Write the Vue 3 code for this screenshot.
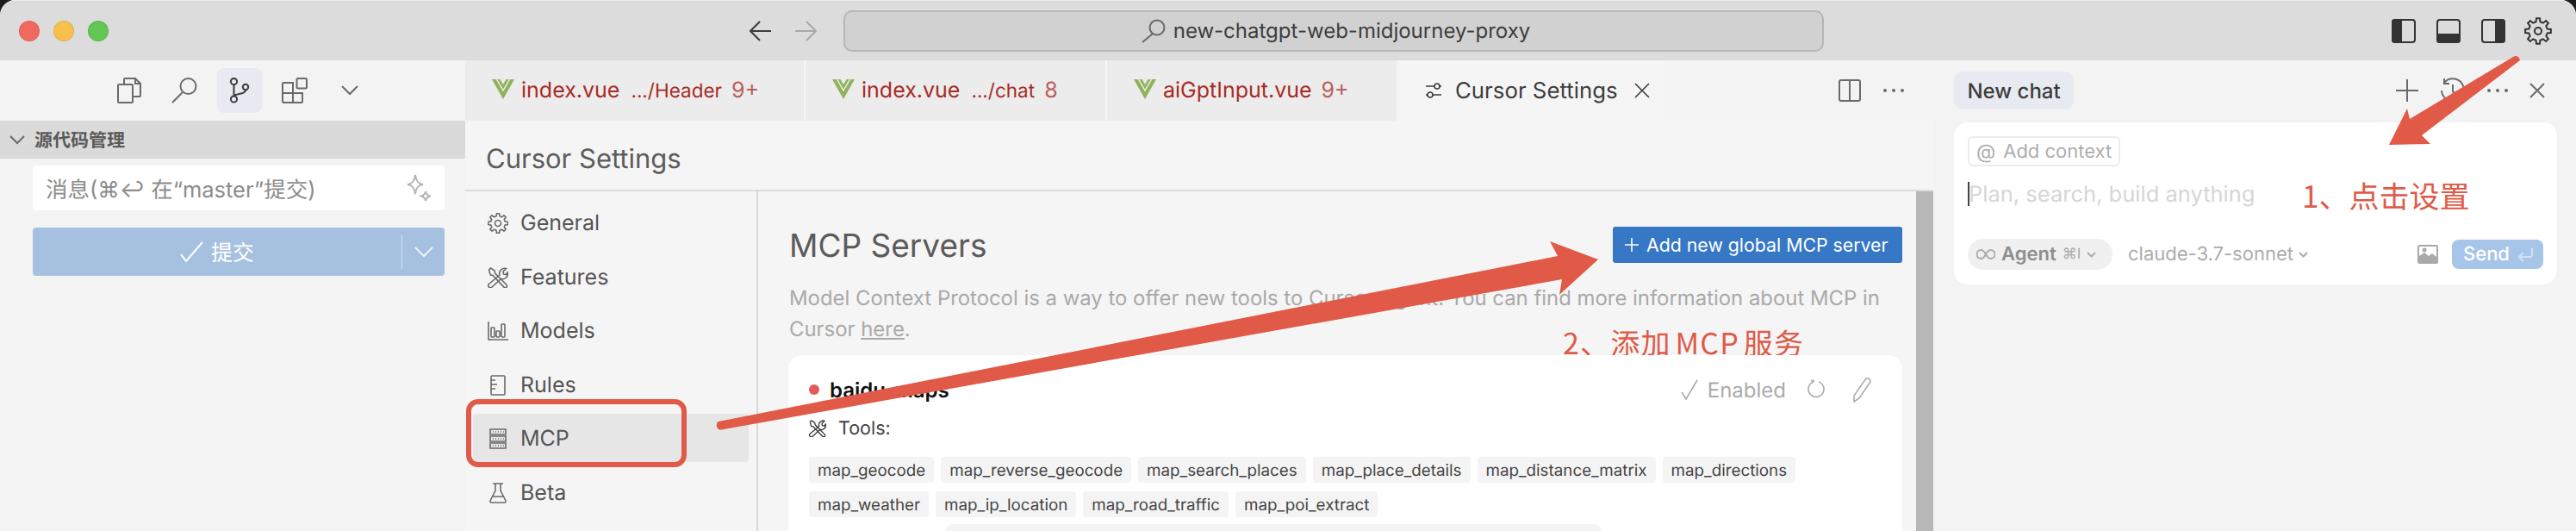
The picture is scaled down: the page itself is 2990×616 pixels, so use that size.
<script setup>
function gear(cx, cy, ro, ri, teeth) {
  const pts = []
  const step = (Math.PI * 2) / teeth
  for (let i = 0; i < teeth; i++) {
    const a = i * step - Math.PI / 2
    const w = step * 0.17
    const p = (r, t) => `${(cx + r * Math.cos(t)).toFixed(2)} ${(cy + r * Math.sin(t)).toFixed(2)}`
    pts.push(`${i ? 'L' : 'M'}${p(ro, a - w)}`, `L${p(ro, a + w)}`, `L${p(ri, a + w * 1.7)}`, `L${p(ri, a + step - w * 1.7)}`)
  }
  return pts.join(' ') + ' Z'
}
const bigGear = gear(16, 16, 15, 11, 8)
const navItems = [
  { label: 'General', paths: [gear(12, 12, 11.5, 8.5, 8), 'M12 8.5a3.5 3.5 0 1 0 0 7 3.5 3.5 0 0 0 0-7z'] },
  { label: 'Features', paths: ['M1.5 3 3.5 1 8 4l.6 3L22 20.5a2 2 0 0 1-2.8 2.8L6 9.5l-2.8-.7z', 'M14 9a6 6 0 0 1 7.5-7.5L18 5l.5 3 3 .5L23 6a6 6 0 0 1-7.5 7.5L5 23a2 2 0 0 1-3.5-3.5z'] },
  { label: 'Models', paths: ['M1 1v21h23', 'M5 8h2a1 1 0 0 1 1 1v9a1 1 0 0 1-1 1H5a1 1 0 0 1-1-1V9a1 1 0 0 1 1-1z', 'M11 12h2a1 1 0 0 1 1 1v5a1 1 0 0 1-1 1h-2a1 1 0 0 1-1-1v-5a1 1 0 0 1 1-1z', 'M17 4h2a1 1 0 0 1 1 1v13a1 1 0 0 1-1 1h-2a1 1 0 0 1-1-1V5a1 1 0 0 1 1-1z'] },
  { label: 'Rules', paths: ['M5 1h14a1 1 0 0 1 1 1v20a1 1 0 0 1-1 1H5a1 1 0 0 1-1-1V2a1 1 0 0 1 1-1z', 'M4 6h5M4 11h7M4 16h5'] },
  { label: 'MCP', paths: ['M3 1h18v6H3zM3 9h18v6H3zM3 17h18v6H3z', 'M6 4h1M9 4h1M12 4h1M15 4h1M18 4h1M6 12h1M9 12h1M12 12h1M15 12h1M18 12h1M6 20h1M9 20h1M12 20h1M15 20h1M18 20h1'] },
  { label: 'Beta', paths: ['M6 1h12M9 1v8L3 21a1.4 1.4 0 0 0 1.4 2h15.2a1.4 1.4 0 0 0 1.4-2L15 9V1M5.5 16h13'] },
]
const rows = [
  ['map_geocode', 'map_reverse_geocode', 'map_search_places', 'map_place_details', 'map_distance_matrix', 'map_directions'],
  ['map_weather', 'map_ip_location', 'map_road_traffic', 'map_poi_extract'],
]
const tabs = [
  { name: 'index.vue', path: '.../Header', n: '9+', w: 395 },
  { name: 'index.vue', path: '.../chat', n: '8', w: 350 },
  { name: 'aiGptInput.vue', path: '', n: '9+', w: 338 },
]
</script>

<template>
  <div class="window">
    <header class="titlebar">
      <div class="lights">
        <i class="light red"></i><i class="light yellow"></i><i class="light green"></i>
      </div>
      <div class="arrows">
        <svg width="26" height="26" viewBox="0 0 26 26" class="ico-dark"><path d="M25 13H1M12 2 1 13l11 11" /></svg>
        <svg width="26" height="26" viewBox="0 0 26 26" class="ico-faint"><path d="M1 13h24M14 2l11 11-11 11" /></svg>
      </div>
      <div class="searchbox">
        <svg width="28" height="28" viewBox="0 0 28 28" class="ico-mid"><circle cx="18" cy="10" r="8.500" /><path d="M13 17 1 27" /></svg>
        <span>new-chatgpt-web-midjourney-proxy</span>
      </div>
      <div class="panels">
        <svg width="28" height="28" viewBox="0 0 28 28"><rect x="1" y="1" width="26" height="26" rx="3" class="pf" /><path d="M4 0h8v28H4a4 4 0 0 1-4-4V4a4 4 0 0 1 4-4z" /></svg>
        <svg width="28" height="28" viewBox="0 0 28 28"><rect x="1" y="1" width="26" height="26" rx="3" class="pf" /><path d="M0 17h28v7a4 4 0 0 1-4 4H4a4 4 0 0 1-4-4z" /></svg>
        <svg width="28" height="28" viewBox="0 0 28 28"><rect x="1" y="1" width="26" height="26" rx="3" class="pf" /><path d="M16 0h8a4 4 0 0 1 4 4v20a4 4 0 0 1-4 4h-8z" /></svg>
        <svg class="gear" width="32" height="32" viewBox="0 0 32 32"><path :d="bigGear" class="pf" /><circle cx="16" cy="16" r="4" class="pf" /></svg>
      </div>
    </header>

    <div class="workspace">
      <aside class="side">
        <div class="activity">
          <span class="slot">
            <svg width="28" height="30" viewBox="0 0 28 30" class="ico-mid"><path d="M8 8V2a1 1 0 0 1 1-1h12l6 6v14a1 1 0 0 1-1 1H18M21 1v6h6" /><path d="M2 8h15a1 1 0 0 1 1 1v19a1 1 0 0 1-1 1H2a1 1 0 0 1-1-1V9a1 1 0 0 1 1-1z" /></svg>
          </span>
          <span class="slot">
            <svg width="30" height="30" viewBox="0 0 30 30" class="ico-mid"><circle cx="19.500" cy="10" r="9" /><path d="M13 17 1 29" /></svg>
          </span>
          <span class="slot on">
            <svg width="24" height="30" viewBox="0 0 24 30" class="ico-dark"><circle cx="5.500" cy="4.500" r="3.600" /><circle cx="5.500" cy="25" r="3.600" /><circle cx="19" cy="11" r="3.200" /><path d="M5.500 8v13.500M19 14.200c0 3-3 4-6.500 4.600-3.500.6-7 1-7 3" /></svg>
          </span>
          <span class="slot">
            <svg width="30" height="30" viewBox="0 0 30 30" class="ico-mid"><path d="M13 6H2a1 1 0 0 0-1 1v21a1 1 0 0 0 1 1h21a1 1 0 0 0 1-1V18H13zM1 18h12v11" /><rect x="17.500" y="1" width="11.500" height="11.500" rx="1.500" /></svg>
          </span>
          <span class="slot">
            <svg width="20" height="12" viewBox="0 0 20 12" class="ico-mid"><path d="m1 1 9 9 9-9" /></svg>
          </span>
        </div>
        <div class="section">
          <svg width="18" height="11" viewBox="0 0 18 11" class="ico-mid"><path d="m1 1 8 8 8-8" /></svg>
          <span>源代码管理</span>
        </div>
        <div class="msg">
          <span>消息(⌘↩ 在“master”提交)</span>
          <svg width="28" height="32" viewBox="0 0 28 32" class="ico-faint2"><path d="M10 1c1 7 3 10 9 11-6 1-8 4-9 11-1-7-3-10-9-11 6-1 8-4 9-11zM22 20c.5 3 1.500 4.500 5 5.500-3.500 1-4.500 2.500-5 5.500-.5-3-1.500-4.500-5-5.500 3.500-1 4.500-2.500 5-5.500z" /></svg>
        </div>
        <div class="commit">
          <span class="commit-main">
            <svg width="28" height="24" viewBox="0 0 28 24" class="ico-white"><path d="m1 15 6 8L26 1" /></svg>
            提交
          </span>
          <span class="commit-more">
            <svg width="22" height="13" viewBox="0 0 22 13" class="ico-white thin"><path d="m1 1 10 10L21 1" /></svg>
          </span>
        </div>
      </aside>

      <main class="main">
        <div class="tabs">
          <div v-for="t in tabs" :key="t.name + t.path" class="tab" :style="{ width: t.w + 'px' }">
            <svg class="vue" width="26" height="23" viewBox="0 0 26 23"><path d="M0 0h26L13 23z" fill="#8fb35b" /><path d="M9.500 0 13 6l3.500-6z" fill="#ececec" /><path d="m5.500 0 7.500 13L20.500 0" stroke="#ececec" stroke-width="1.500" /></svg>
            <span class="tab-name">{{ t.name }}</span>
            <span v-if="t.path" class="tab-path">{{ t.path }}</span>
            <span class="tab-n">{{ t.n }}</span>
          </div>
          <div class="tab active">
            <svg width="20" height="18" viewBox="0 0 20 18" class="ico-dark thin"><path d="M1 4h10M17 4h2M1 14h2M9 14h10" /><circle cx="14" cy="4" r="3" /><circle cx="6" cy="14" r="3" /></svg>
            <span class="tab-title">Cursor Settings</span>
            <svg width="18" height="18" viewBox="0 0 18 18" class="ico-dark thin"><path d="m1 1 16 16M17 1 1 17" /></svg>
          </div>
          <div class="tab-tools">
            <svg width="26" height="26" viewBox="0 0 26 26" class="ico-mid"><rect x="1" y="1" width="24" height="24" rx="2" /><path d="M13 1v24" /></svg>
            <span class="dots"><i></i><i></i><i></i></span>
          </div>
        </div>

        <div class="settings-head">Cursor Settings</div>

        <div class="settings">
          <nav class="nav">
            <div v-for="n in navItems" :key="n.label" class="nav-item" :class="{ sel: n.label === 'MCP' }">
              <svg width="24" height="24" viewBox="0 0 24 24" class="ico-mid thin">
                <path v-for="d in n.paths" :key="d" :d="d" />
              </svg>
              <span>{{ n.label }}</span>
            </div>
          </nav>
          <section class="content">
            <div class="content-head">
              <h1>MCP Servers</h1>
              <button class="add">
                <svg width="16" height="16" viewBox="0 0 16 16" class="ico-white thin"><path d="M8 0v16M0 8h16" /></svg>
                Add new global MCP server
              </button>
            </div>
            <p class="desc">Model Context Protocol is a way to offer new tools to Cursor Agent. You can find more information about MCP in Cursor <u>here</u>.</p>
            <div class="note2">2、添加 MCP 服务</div>
            <div class="card">
              <div class="card-top">
                <i class="dot"></i>
                <strong>baidu-maps</strong>
                <span class="card-actions">
                  <svg width="20" height="24" viewBox="0 0 20 24" class="ico-grey thin"><path d="m1 15 5 8L19 1" /></svg>
                  <span class="enabled">Enabled</span>
                  <svg width="20" height="24" viewBox="0 0 20 24" class="ico-grey thin"><path d="M7 3a9 9 0 1 0 6 0M7 3V.5M7 3 4 1" /></svg>
                  <svg width="22" height="30" viewBox="0 0 22 30" class="ico-grey thin"><path d="M16 2c2-1 5 1 5 4L8 25l-6 4v-7z" /></svg>
                </span>
              </div>
              <div class="tools">
                <svg width="20" height="20" viewBox="0 0 24 24" class="ico-dark thin">
                  <path v-for="d in navItems[1].paths" :key="d" :d="d" />
                </svg>
                Tools:
              </div>
              <div class="chips">
                <div v-for="(r, i) in rows" :key="i" class="chip-row">
                  <span v-for="c in r" :key="c" class="chip">{{ c }}</span>
                </div>
                <div class="chip-wide"></div>
              </div>
            </div>
          </section>
          <div class="scrollbar"></div>
        </div>
      </main>

      <aside class="chat">
        <div class="chat-head">
          <span class="newchat">New chat</span>
          <div class="chat-tools">
            <svg width="26" height="26" viewBox="0 0 26 26" class="ico-mid"><path d="M13 0v26M0 13h26" /></svg>
            <svg width="30" height="30" viewBox="0 0 30 30" class="ico-mid"><path d="M5 6a13 13 0 1 1-3 9M5 1v6h6M15 8v8l5 5" /></svg>
            <span class="dots"><i></i><i></i><i></i></span>
            <svg width="18" height="18" viewBox="0 0 18 18" class="ico-mid"><path d="m1 1 16 16M17 1 1 17" /></svg>
          </div>
        </div>
        <div class="composer">
          <div class="ctx"><span class="at">@</span>Add context</div>
          <div class="prompt"><i class="caret"></i>Plan, search, build anything</div>
          <div class="note1">1、点击设置</div>
          <div class="composer-foot">
            <span class="agent">
              <svg width="22" height="12" viewBox="0 0 22 12" class="ico-grey"><path d="M11 6C9 2.500 7.500 1 5.500 1a5 5 0 0 0 0 10c2 0 3.500-1.500 5.500-5s3.500-5 5.500-5a5 5 0 0 1 0 10c-2 0-3.500-1.500-5.500-5z" /></svg>
              <b>Agent</b>
              <em>⌘I</em>
              <svg width="11" height="7" viewBox="0 0 11 7" class="ico-grey"><path d="m1 1 4.500 4.500L10 1" /></svg>
            </span>
            <span class="model">claude-3.7-sonnet
              <svg width="11" height="7" viewBox="0 0 11 7" class="ico-grey"><path d="m1 1 4.500 4.500L10 1" /></svg>
            </span>
            <svg class="img" width="24" height="24" viewBox="0 0 24 24"><path fill-rule="evenodd" d="M2 1h20a2 2 0 0 1 2 2v18a2 2 0 0 1-2 2H2a2 2 0 0 1-2-2V3a2 2 0 0 1 2-2zm0 2v11l6-4 5 4 4-3 5 4V3z" fill="#a9a9a9" /><circle cx="8" cy="7" r="2.500" fill="#a9a9a9" /></svg>
            <span class="send">Send
              <svg width="17" height="17" viewBox="0 0 17 17" class="ico-pale"><path d="M16 1v8a2 2 0 0 1-2 2H2M6 6l-5 5 5 5" /></svg>
            </span>
          </div>
        </div>
      </aside>
    </div>

    <svg class="overlay" width="2990" height="616" viewBox="0 0 2990 616">
      <path class="mark" d="M2917 66q6-3 8 4L2811 157l10 10-48 1 21-42 3 12z" />
      <rect x="544" y="466" width="250" height="73" rx="11" fill="none" stroke="#e05a47" stroke-width="6" />
      <path class="mark" d="M834 489 1808 297l-9-17 56 21-45 41 3-18L840 498q-7 2-8-3t2-6z" />
    </svg>
  </div>
</template>

<style scoped>
.window {
  position: relative;
  width: 2990px;
  height: 616px;
  overflow: hidden;
  display: flex;
  flex-direction: column;
  border-radius: 18px 18px 0 0;
  background: #f3f3f3;
  font-family: Inter, "Noto Sans CJK SC", "DejaVu Sans", sans-serif;
  color: #444;
  white-space: nowrap;
  text-rendering: geometricPrecision;
}
svg { flex: none; display: block; fill: none; stroke-width: 2; }
i, em { font-style: normal; }
.ico-dark { stroke: #3c3c3c; }
.ico-mid { stroke: #6a6a6a; }
.ico-faint { stroke: #a9a9a9; }
.ico-faint2 { stroke: #b5b5b5; }
.ico-white { stroke: #fff; }
.ico-grey { stroke: #ababab; }
.ico-pale { stroke: #d2e0f2; }
.thin { stroke-width: 1.6; }

.titlebar {
  height: 70px;
  flex: none;
  display: flex;
  align-items: center;
  background: #dcdcdc;
  border-top: 1px solid #ececec;
  box-sizing: border-box;
}
.lights { display: flex; gap: 16px; margin-left: 22px; width: 848px; flex: none; }
.light { width: 24px; height: 24px; border-radius: 50%; box-sizing: border-box; border: 1px solid rgba(0, 0, 0, .08); }
.red { background: #f0695f; }
.yellow { background: #f7c04d; }
.green { background: #62c554; }
.arrows { display: flex; gap: 26px; width: 109px; flex: none; }
.searchbox {
  width: 1138px;
  height: 48px;
  flex: none;
  box-sizing: border-box;
  display: flex;
  align-items: center;
  justify-content: center;
  gap: 9px;
  padding-left: 5px;
  background: #d1d1d1;
  border: 2px solid #b6b6b6;
  border-radius: 10px;
  font-size: 24px;
  color: #3d3d3d;
}
.panels { display: flex; align-items: center; gap: 24px; margin-left: 659px; }
.panels svg path:not(.pf), .panels svg { fill: #333; }
.pf { fill: none !important; stroke: #333; stroke-width: 2; }
.gear { margin-left: -2px; fill: none !important; }

.workspace { flex: 1; display: flex; min-height: 0; }

.side { width: 540px; flex: none; background: #f3f3f3; }
.activity { height: 70px; box-sizing: border-box; padding: 9px 0 0 124px; display: flex; gap: 12px; align-items: flex-start; }
.slot { width: 52px; height: 52px; display: flex; align-items: center; justify-content: center; border-radius: 8px; }
.slot.on { background: #e9eaf1; }
.section { height: 44px; display: flex; align-items: center; gap: 11px; padding-left: 11px; background: #dadada; font-size: 21px; font-weight: 700; color: #5a5a5a; }
.msg { margin: 8px 24px 0 38px; height: 52px; padding: 0 16px 0 15px; display: flex; align-items: center; justify-content: space-between; background: #fff; border-radius: 4px; font-size: 25.500px; color: #8c8c8c; }
.commit { margin: 20px 24px 0 38px; height: 56px; display: flex; align-items: center; background: #a6c1e0; border-radius: 4px; color: #fff; font-size: 25px; }
.commit-main { flex: 1; display: flex; align-items: center; justify-content: center; gap: 8px; }
.commit-more { width: 50px; height: 40px; box-sizing: border-box; display: flex; align-items: center; justify-content: center; border-left: 1px solid #d3dfee; }

.main { width: 1704px; flex: none; display: flex; flex-direction: column; background: #f5f5f5; }
.tabs { height: 70px; flex: none; display: flex; background: #f3f3f3; }
.tab { height: 70px; box-sizing: border-box; display: flex; align-items: center; padding-left: 31px; background: #ececec; border-right: 2px solid #f5f5f5; font-size: 25px; color: #a82b25; }
.vue { margin-right: 8px; margin-top: -3px; }
.tab-path { margin-left: 13px; font-size: 22.500px; }
.tab-n { margin-left: 11px; font-size: 25px; color: #b9605c; }
.tab.active { width: 309px; padding-left: 31px; background: #f5f5f5; border: 0; color: #3d3d3d; font-size: 25.800px; }
.tab-title { margin: 0 19px 0 15px; }
.tab-tools { margin-left: 202px; display: flex; align-items: center; gap: 26px; }
.dots { display: inline-flex; gap: 6px; }
.dots i { width: 4px; height: 4px; border-radius: 50%; background: #6a6a6a; }

.settings-head { height: 82px; flex: none; box-sizing: border-box; padding: 8px 0 0 24px; display: flex; align-items: center; border-bottom: 2px solid #dcdcdc; font-size: 31px; color: #5c5c5c; }
.settings { flex: 1; min-height: 0; display: flex; }
.nav { width: 340px; flex: none; box-sizing: border-box; padding: 8px 9px 0; display: flex; flex-direction: column; gap: 6.600px; border-right: 2px solid #d8d8d8; }
.nav-item { height: 56px; flex: none; box-sizing: border-box; padding-top: 2px; display: flex; align-items: center; gap: 14px; padding-left: 17px; border-radius: 4px; font-size: 25px; color: #555; }
.nav-item.sel { background: #e6e6e6; }
.content { flex: 1; min-width: 0; position: relative; box-sizing: border-box; padding: 41px 16px 0 36px; }
.content-head { height: 42px; display: flex; align-items: center; justify-content: space-between; }
h1 { margin: 0; font-size: 37px; font-weight: 400; color: #5b5b5b; }
.add { width: 336px; height: 42px; box-sizing: border-box; padding: 0 0 0 14px; display: flex; align-items: center; gap: 9px; border: 0; border-radius: 3px; background: #3678c6; color: #fff; font: 400 21.300px Inter, sans-serif; }
.desc { margin: 23px 0 0; font-size: 23.900px; line-height: 36px; color: #a9a9a9; white-space: normal; }
.note2 { position: absolute; left: 934px; top: 153px; font-size: 34px; line-height: 44px; letter-spacing: 1.200px; word-spacing: -4px; color: #e05a47; font-family: "Noto Sans CJK SC", sans-serif; }
.card { position: relative; margin-top: 12px; height: 260px; margin-left: -1px; box-sizing: border-box; padding: 20px 24px 0; background: #fff; border-radius: 16px 16px 0 0; color: #222; }
.card-top { height: 40px; display: flex; align-items: center; }
.dot { width: 12px; height: 12px; margin: 0 12px 0 0; border-radius: 50%; background: #e25c5c; }
.card-top strong { font-size: 24px; font-weight: 600; color: #111; }
.card-actions { margin-left: auto; display: flex; align-items: center; margin-right: 12px; }
.enabled { margin: 0 25px 0 11px; font-size: 24px; color: #ababab; }
.card-actions svg:last-child { margin-left: 32px; }
.tools { margin-top: 10px; height: 30px; display: flex; align-items: center; gap: 14px; font-size: 21.500px; color: #444; }
.chips { margin-top: 18px; display: flex; flex-direction: column; gap: 10px; }
.chip-row { display: flex; gap: 8px; }
.chip { height: 30px; box-sizing: border-box; padding: 0 10px; display: flex; align-items: center; background: #f4f4f4; border-radius: 4px; font-size: 18.800px; color: #444; }
.chip-wide { width: 761px; height: 30px; margin: -2px 0 0 159px; background: #f4f4f4; border-radius: 8px; }
.scrollbar { width: 20px; flex: none; background: #b8b8b8; }

.chat { flex: 1; min-width: 0; box-sizing: border-box; padding: 13px 22px 0 24px; background: #f3f3f3; }
.chat-head { height: 44px; display: flex; align-items: center; justify-content: space-between; }
.newchat { width: 139px; height: 44px; box-sizing: border-box; display: flex; align-items: center; justify-content: center; background: #e8eaf1; border-radius: 10px; font-size: 24px; font-weight: 500; color: #3c3c3c; }
.chat-tools { display: flex; align-items: center; gap: 25px; padding-right: 14px; }
.composer { position: relative; margin-top: 15px; height: 188px; box-sizing: border-box; padding: 16px; background: #fff; border-radius: 16px; }
.ctx { width: 177px; height: 35px; box-sizing: border-box; display: flex; align-items: center; gap: 9px; padding-left: 8px; border: 2px solid #ececec; border-radius: 6px; font-size: 22px; color: #adadad; }
.at { font-size: 23px; }
.prompt { margin-top: 18px; height: 28px; display: flex; align-items: center; font-size: 25.500px; color: #d6d6d6; }
.caret { width: 2px; height: 28px; margin-right: -1px; background: #444; }
.note1 { position: absolute; left: 404px; top: 60px; font-size: 35px; line-height: 50px; color: #e05a47; font-family: "Noto Sans CJK SC", sans-serif; }
.composer-foot { margin-top: 38px; height: 36px; display: flex; align-items: center; font-size: 22px; color: #ababab; }
.agent { width: 168px; height: 36px; box-sizing: border-box; padding-left: 10px; display: flex; align-items: center; gap: 7px; background: #f0f0f0; border-radius: 18px; }
.agent b { font-weight: 600; color: #8e8e8e; }
.agent em { font-size: 17px; color: #ababab; }
.model { margin-left: 18px; display: flex; align-items: center; gap: 6px; }
.img { margin-left: auto; margin-right: 16px; stroke: none; }
.send { width: 106px; height: 34px; box-sizing: border-box; padding-left: 13px; display: flex; align-items: center; gap: 10px; background: #a7c5e9; border-radius: 8px; color: #fff; font-weight: 500; }

.overlay { position: absolute; left: 0; top: 0; pointer-events: none; }
.mark { fill: #e05a47; stroke: none; }
</style>

<style>
html, body { margin: 0; background: #1c1c1c; }
</style>
